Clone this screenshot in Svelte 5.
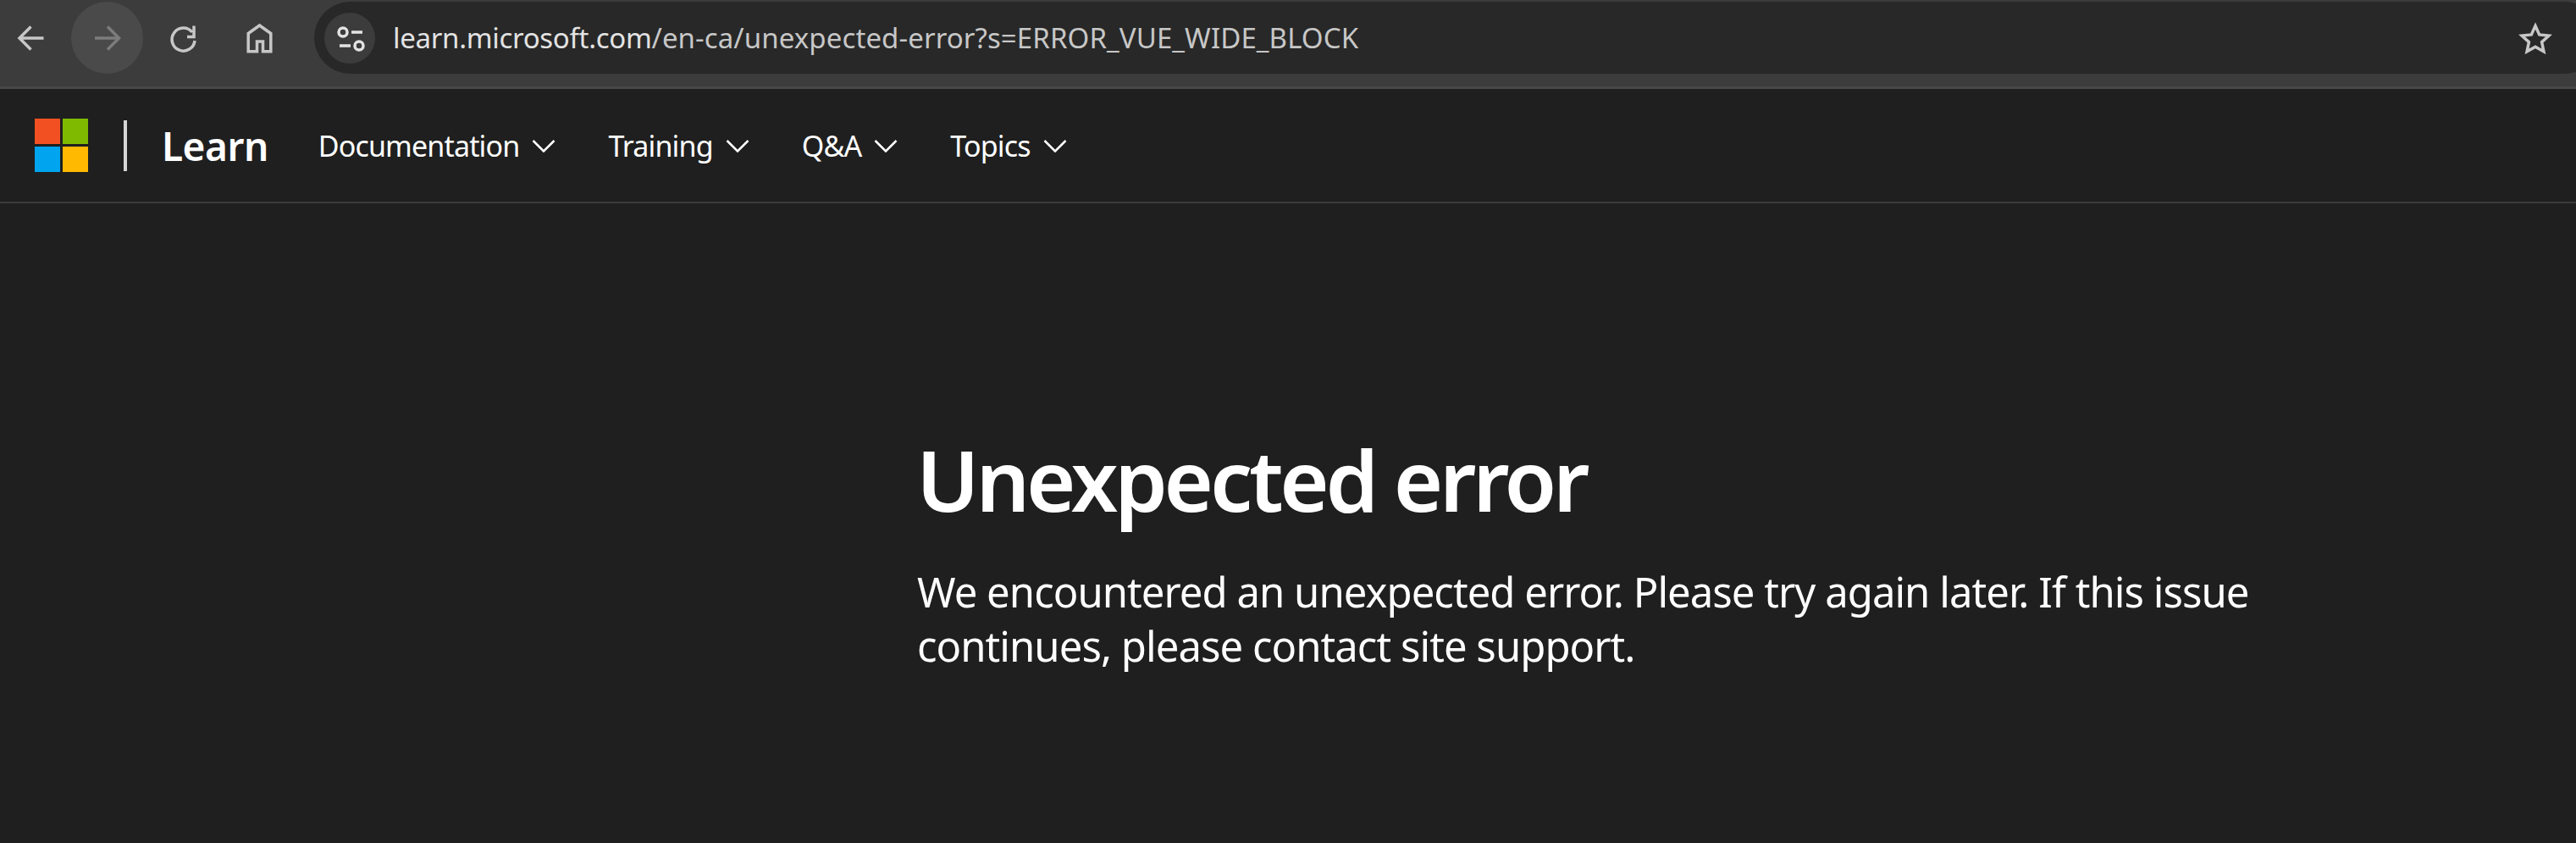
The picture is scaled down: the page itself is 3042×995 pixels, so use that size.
<script lang="ts">
  const navItems = ["Documentation", "Training", "Q&A", "Topics"];
</script>

<div class="page">
  <div class="toolbar">
    <div class="tool-buttons">
      <button class="tool" aria-label="Back">
        <svg viewBox="0 0 40 40" width="40" height="40"><path d="M34.500 20H7M19.500 6.500 6 20l13.500 13.500" /></svg>
      </button>
      <button class="tool forward" aria-label="Forward">
        <svg viewBox="0 0 40 40" width="40" height="40"><path d="M5 20h28M20 6.500 33.500 20 20 33.500" /></svg>
      </button>
      <button class="tool" aria-label="Reload">
        <svg viewBox="0 0 40 40" width="40" height="40"><path d="M30 13A13.500 13.500 0 1 0 33 23M32 5.500V18.500H24" /></svg>
      </button>
      <button class="tool" aria-label="Home">
        <svg viewBox="0 0 40 40" width="40" height="40"><path d="M6.200 35.800V14.500L19.500 5 32.800 14.500V35.800H23.500V23.900H16.500V35.800z" /></svg>
      </button>
    </div>
    <div class="omnibox">
      <span class="site-info">
        <svg viewBox="0 0 60 60" width="60" height="60">
          <circle cx="22" cy="23" r="5" />
          <path d="M32 23h13M18 39h13" />
          <circle cx="41" cy="39" r="5" />
        </svg>
      </span>
      <span class="url"><span class="host">learn.microsoft.com</span>/en-ca/unexpected-error?s=ERROR_VUE_WIDE_BLOCK</span>
      <svg class="star" viewBox="0 0 40 38" width="40" height="38">
        <path d="M20 4.500l4.700 10.400 11.300 1.200-8.400 7.600 2.300 11.100L20 29.200l-9.900 5.600 2.300-11.100L4 16.100l11.300-1.200z" />
      </svg>
    </div>
  </div>

  <header class="site-header">
    <svg class="ms-logo" viewBox="0 0 63 63" width="63" height="63">
      <rect width="30" height="30" fill="#f25022" />
      <rect x="33" width="30" height="30" fill="#7fba00" />
      <rect y="33" width="30" height="30" fill="#00a4ef" />
      <rect x="33" y="33" width="30" height="30" fill="#ffb900" />
    </svg>
    <span class="divider"></span>
    <span class="brand">Learn</span>
    <nav>
      {#each navItems as item}
        <span class="nav-item">
          {item}
          <svg viewBox="0 0 28 16" width="28" height="16"><path d="M1.500 2 14 14.500 26.500 2" /></svg>
        </span>
      {/each}
    </nav>
  </header>

  <main>
    <h1>Unexpected error</h1>
    <p>We encountered an unexpected error. Please try again later. If this issue continues, please contact site support.</p>
  </main>
</div>

<style>
  :global(body) {
    margin: 0;
    background: #1f1f1f;
  }

  .page {
    height: 995px;
    overflow: hidden;
    background: #1f1f1f;
    color: #fff;
    font-family: "Noto Sans", "Open Sans", sans-serif;
  }

  .toolbar {
    display: flex;
    height: 102px;
    background: #3c3c3c;
    border-bottom: 3px solid #484848;
    align-items: flex-start;
  }

  .tool-buttons {
    flex: none;
    display: flex;
    gap: 5px;
    padding-top: 2px;
    width: 377px;
    margin-left: -6px;
  }

  .tool {
    width: 85px;
    height: 85px;
    padding: 0;
    border: 0;
    border-radius: 50%;
    background: none;
    display: flex;
    align-items: center;
    justify-content: center;
  }

  .tool svg {
    fill: none;
    stroke: #c7c7c7;
    stroke-width: 3.500;
  }

  .forward {
    background: #4a4a4a;
  }

  .forward svg {
    stroke: #7c7c7c;
  }

  .omnibox {
    flex: none;
    width: 2700px;
    height: 85px;
    margin-top: 2px;
    border-radius: 43px;
    background: #282828;
    display: flex;
    align-items: center;
    padding-left: 12px;
    box-sizing: border-box;
    position: relative;
  }

  .site-info {
    width: 60px;
    height: 60px;
    border-radius: 50%;
    background: #3c3c3c;
    flex: none;
  }

  .site-info svg {
    fill: none;
    stroke: #e3e3e3;
    stroke-width: 3.500;
  }

  .url {
    margin-left: 21px;
    font-size: 33px;
    color: #c7c7c7;
    white-space: nowrap;
    letter-spacing: 0.1px;
  }

  .host {
    color: #e3e3e3;
    letter-spacing: -0.3px;
  }

  .star {
    position: absolute;
    left: 2603px;
    top: 24px;
    fill: none;
    stroke: #c7c7c7;
    stroke-width: 3.500;
  }

  .site-header {
    height: 133px;
    border-bottom: 2px solid #3b3b3b;
    display: flex;
    align-items: center;
    padding-left: 41px;
  }

  .ms-logo {
    flex: none;
  }

  .divider {
    width: 4px;
    height: 60px;
    margin-left: 42px;
    background: #d6d6d6;
  }

  .brand {
    margin-left: 41px;
    font-size: 46px;
    font-weight: 600;
    letter-spacing: -0.5px;
  }

  nav {
    display: flex;
    gap: 62px;
    margin-left: 59px;
  }

  .nav-item {
    display: flex;
    align-items: center;
    gap: 15px;
    font-size: 34px;
    letter-spacing: -0.85px;
    white-space: nowrap;
  }

  .nav-item svg {
    fill: none;
    stroke: #fff;
    stroke-width: 2.500;
  }

  main {
    padding: 260px 0 0 1082px;
    width: 1600px;
  }

  h1 {
    margin: 0;
    font-size: 100px;
    font-weight: 600;
    line-height: 1.3;
    letter-spacing: -4.2px;
  }

  p {
    margin: 36px 0 0 1px;
    font-size: 49px;
    line-height: 64px;
    letter-spacing: -0.95px;
  }
</style>
